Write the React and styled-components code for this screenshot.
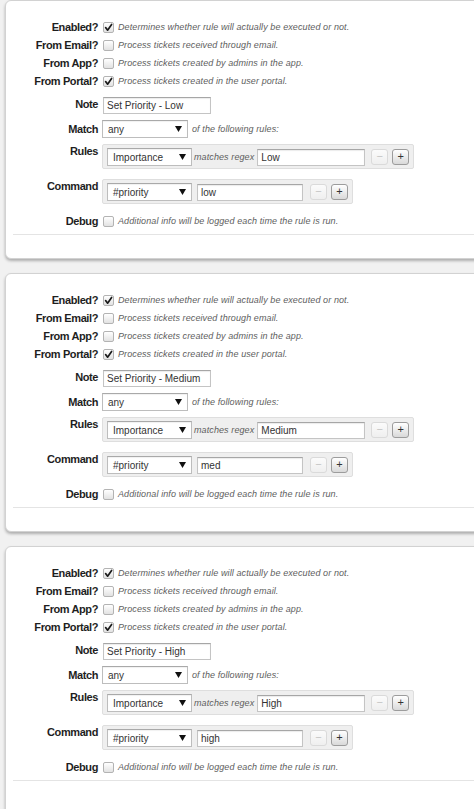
import React from "react";
import styled, { createGlobalStyle } from "styled-components";

const GlobalStyle = createGlobalStyle`
  html, body { margin: 0; padding: 0; background: #f1f1f1; }
  body {
    width: 474px;
    height: 809px;
    overflow: hidden;
    font-family: "Liberation Sans", Arial, Helvetica, sans-serif;
    color: #222;
  }
`;

const Page = styled.div`
  width: 474px;
  height: 809px;
  overflow: hidden;
  box-sizing: border-box;
  display: flex;
  flex-direction: column;
  gap: 14px;
  padding-left: 5px;
`;

const Card = styled.section`
  flex-shrink: 0;
  box-sizing: border-box;
  width: 530px;
  height: ${(p) => (p.$last ? 280 : 259)}px;
  padding-top: 17px;
  background: #fff;
  border: 1px solid #d2d2d2;
  border-radius: 6px;
  box-shadow: 0 2px 3px rgba(0, 0, 0, 0.28);
  display: flex;
  flex-direction: column;
`;

const Row = styled.div`
  display: flex;
  align-items: ${(p) => (p.$center ? "center" : "flex-start")};
  min-height: 18px;
  margin-top: ${(p) => p.$mt || 0}px;
`;

const Label = styled.div`
  flex-shrink: 0;
  width: 92px;
  margin-right: 4px;
  text-align: right;
  font-size: 11px;
  font-weight: bold;
  letter-spacing: -0.4px;
  line-height: ${(p) => p.$lh || 14}px;
  color: #1e1e1e;
  white-space: nowrap;
`;

const Box = styled.span`
  box-sizing: border-box;
  width: 11px;
  height: 11px;
  margin-left: 1px;
  border: 1px solid #b3b3b3;
  border-radius: 2px;
  background: linear-gradient(#ffffff, #e2e2e2);
  display: inline-flex;
  align-items: center;
  justify-content: center;
  flex-shrink: 0;
`;

const Hint = styled.span`
  margin-left: ${(p) => p.$ml ?? 4}px;
  margin-right: ${(p) => p.$mr ?? 0}px;
  font-size: 9px;
  font-style: italic;
  letter-spacing: 0.1px;
  color: #5e5e5e;
  white-space: nowrap;
`;

const TextInput = styled.div`
  box-sizing: border-box;
  width: ${(p) => p.$w}px;
  height: 17px;
  margin-left: ${(p) => p.$ml || 0}px;
  padding: 0 3px;
  border: 1px solid #c4c4c4;
  border-top-color: #a6a6a6;
  background: #fff;
  box-shadow: inset 0 1px 1px rgba(0, 0, 0, 0.08);
  font-size: 10px;
  line-height: 15px;
  color: #333;
  white-space: nowrap;
  flex-shrink: 0;
`;

const SelectBox = styled.div`
  box-sizing: border-box;
  width: ${(p) => p.$w}px;
  height: 18px;
  padding: 0 5px 0 5px;
  border: 1px solid #bdbdbd;
  border-top-color: #a9a9a9;
  background: #fff;
  box-shadow: inset 0 1px 1px rgba(0, 0, 0, 0.06);
  display: flex;
  align-items: center;
  justify-content: space-between;
  font-size: 10px;
  color: #333;
  flex-shrink: 0;
`;

const Group = styled.div`
  display: inline-flex;
  align-items: center;
  padding: 3px 4px 2px 4px;
  border: 1px solid #dedede;
  border-radius: 2px;
  background: #efefef;
`;

const SmallButton = styled.div`
  box-sizing: border-box;
  width: 17px;
  height: 16px;
  margin-left: ${(p) => p.$ml || 0}px;
  border: 1px solid ${(p) => (p.$disabled ? "#dadada" : "#9c9c9c")};
  border-radius: 3px;
  background: ${(p) =>
    p.$disabled
      ? "linear-gradient(#fbfbfb, #efefef)"
      : "linear-gradient(#ffffff, #d9d9d9)"};
  color: ${(p) => (p.$disabled ? "#c4c4c4" : "#333")};
  font-size: 11px;
  line-height: 13px;
  text-align: center;
  flex-shrink: 0;
`;

const Rule = styled.div`
  height: 1px;
  margin: 4px 0 0 7px;
  background: #e4e4e4;
`;

function Check({ checked }) {
  return (
    <Box>
      {checked && (
        <svg width="9" height="9" viewBox="0 0 9 9">
          <path
            d="M1.6 4.6 L3.6 7.2 L7.6 1.4"
            fill="none"
            stroke="#1b1b1b"
            strokeWidth="1.7"
            strokeLinecap="round"
            strokeLinejoin="round"
          />
        </svg>
      )}
    </Box>
  );
}

function Select({ w, value }) {
  return (
    <SelectBox $w={w}>
      <span>{value}</span>
      <svg width="7" height="6" viewBox="0 0 7 6">
        <path d="M0 0 H7 L3.5 6 Z" fill="#111" />
      </svg>
    </SelectBox>
  );
}

function CheckRow({ label, checked, hint }) {
  return (
    <Row $center>
      <Label $lh={18}>{label}</Label>
      <Check checked={checked} />
      <Hint>{hint}</Hint>
    </Row>
  );
}

const rules = [
  { note: "Set Priority - Low", regex: "Low", cmd: "low" },
  { note: "Set Priority - Medium", regex: "Medium", cmd: "med" },
  { note: "Set Priority - High", regex: "High", cmd: "high" },
];

function RuleCard({ note, regex, cmd, last }) {
  return (
    <Card $last={last}>
      <CheckRow
        label="Enabled?"
        checked
        hint="Determines whether rule will actually be executed or not."
      />
      <CheckRow
        label="From Email?"
        hint="Process tickets received through email."
      />
      <CheckRow
        label="From App?"
        hint="Process tickets created by admins in the app."
      />
      <CheckRow
        label="From Portal?"
        checked
        hint="Process tickets created in the user portal."
      />
      <Row $mt={7}>
        <Label>Note</Label>
        <TextInput $w={108} $ml={1}>
          {note}
        </TextInput>
      </Row>
      <Row $mt={5} $center>
        <Label>Match</Label>
        <Select w={86} value="any" />
        <Hint $ml={4}>of the following rules:</Hint>
      </Row>
      <Row $mt={6}>
        <Label>Rules</Label>
        <Group>
          <Select w={85} value="Importance" />
          <Hint $ml={2} $mr={3}>
            matches regex
          </Hint>
          <TextInput $w={108}>{regex}</TextInput>
          <SmallButton $disabled $ml={6}>
            −
          </SmallButton>
          <SmallButton $ml={4}>+</SmallButton>
        </Group>
      </Row>
      <Row $mt={10}>
        <Label>Command</Label>
        <Group>
          <Select w={85} value="#priority" />
          <TextInput $w={106} $ml={5}>
            {cmd}
          </TextInput>
          <SmallButton $disabled $ml={7}>
            −
          </SmallButton>
          <SmallButton $ml={4}>+</SmallButton>
        </Group>
      </Row>
      <Row $mt={8} $center>
        <Label $lh={18}>Debug</Label>
        <Check />
        <Hint>Additional info will be logged each time the rule is run.</Hint>
      </Row>
      <Rule />
    </Card>
  );
}

export default function App() {
  return (
    <>
      <GlobalStyle />
      <Page>
        {rules.map((r, i) => (
          <RuleCard key={r.note} {...r} last={i === rules.length - 1} />
        ))}
      </Page>
    </>
  );
}
